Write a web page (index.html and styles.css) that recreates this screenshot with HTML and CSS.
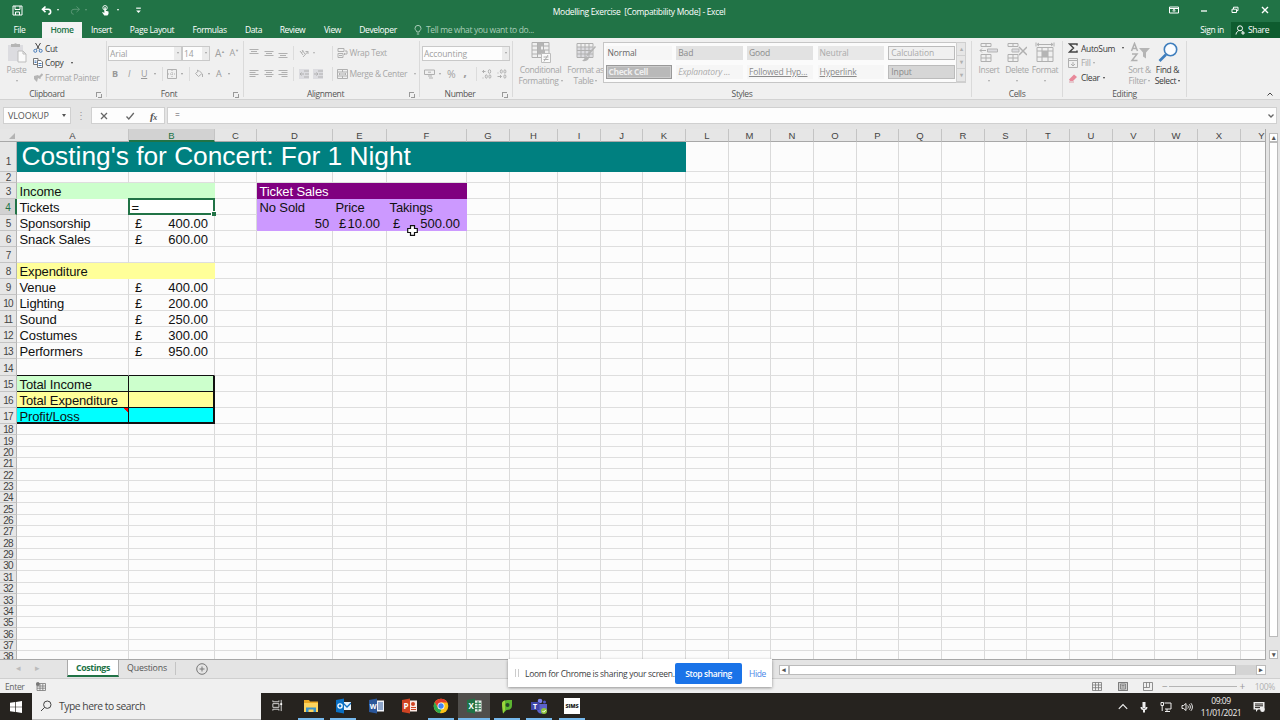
FILE: index.html
```html
<!DOCTYPE html>
<html lang="en">
<head>
    <meta charset="UTF-8">
    <title>Modelling Exercise [Compatibility Mode] - Excel</title>
    <link rel="stylesheet" href="styles.css">
</head>
<body>
<header class="titlebar">
    <div class="quick">
        <svg class="q-save" viewBox="0 0 11 11"><path d="M1 1h9v9H1zM3 1v3.5h5V1M3.5 10V7h4v3" /></svg>
        <svg class="q-undo" viewBox="0 0 11 10"><path d="M4.5 1L1.5 3.8l3 2.8M1.7 3.8H7a2.4 2.4 0 0 1 .3 5" stroke-width="1.6"/></svg>
        <i class="caret"></i>
        <svg class="q-redo" viewBox="0 0 11 10"><path d="M6.5 1l3 2.8-3 2.8M9.3 3.8H4a2.4 2.4 0 0 0-.3 5"/></svg>
        <i class="caret dim"></i>
        <svg class="q-touch" viewBox="0 0 9 12"><circle cx="4" cy="3" r="2.4"/><path class="solid" d="M3.2 2.5h1.6v3.8l3 .9v2.6L6.6 11.5H3.2L.8 8.2l.8-.6 1.6 1z"/></svg>
        <i class="caret"></i>
        <svg class="q-more" viewBox="0 0 6 6"><path d="M1 1h4"/><path class="solid" d="M1 3h4L3 5.2z"/></svg>
    </div>
    <h1>Modelling Exercise&nbsp; [Compatibility Mode] - Excel</h1>
    <div class="window-buttons">
        <svg viewBox="0 0 10 8"><path d="M.5 1h9v6h-9zM.5 2.5h9M5 6V3.5M3.5 4.8L5 3.4l1.5 1.4"/></svg>
        <svg viewBox="0 0 10 8"><path d="M2 5h6" stroke-width="1.3"/></svg>
        <svg viewBox="0 0 10 8"><path d="M2 3.2h4.5v3.3H2zM3.5 3V1.2H8v3.4H6.6"/></svg>
        <svg viewBox="0 0 10 8"><path d="M2 1l6 6M8 1L2 7" stroke-width="1.4"/></svg>
    </div>
</header>

<nav class="tabs">
    <span class="tab file">File</span>
    <span class="tab active">Home</span>
    <span class="tab insert">Insert</span>
    <span class="tab layout">Page Layout</span>
    <span class="tab formulas">Formulas</span>
    <span class="tab data">Data</span>
    <span class="tab review">Review</span>
    <span class="tab view">View</span>
    <span class="tab developer">Developer</span>
    <span class="tell">
        <svg viewBox="0 0 8 10"><path d="M2.8 7C2.8 5.6 1 5 1 3.4a3 3 0 0 1 6 0C7 5 5.2 5.6 5.2 7zM2.8 9h2.4"/></svg>
        Tell me what you want to do...
    </span>
    <span class="signin">Sign in</span>
    <span class="share">
        <svg viewBox="0 0 11 10"><circle cx="5" cy="3.3" r="2.5"/><path d="M1 9.5c.3-2 1.300-3 2.600-3.800M6.500 5.700l1.200.800M8 6.200v3.600M6.200 8h3.600"/></svg>
        Share
    </span>
</nav>

<section class="ribbon">
    <div class="group clipboard">
        <div class="group-body">
            <div class="big paste off">
                <svg viewBox="0 0 20 21"><path class="fill" d="M1 3h15v6h-5v10H1z"/><path class="dark" d="M4 2h3a2 2 0 0 1 3 0h3v3H4z"/><path class="paper" d="M11 9h5l3 3v8h-8zM16 9v3h3"/></svg>
                <span>Paste</span><i class="caret"></i>
            </div>
            <div class="stack">
                <div class="line on"><svg viewBox="0 0 10 10"><path class="ink" d="M2.500 0l4 6.500M7.500 0l-4 6.500"/><circle class="blue" cx="2.300" cy="7.800" r="1.500"/><circle class="blue" cx="7.700" cy="7.800" r="1.500"/></svg>Cut</div>
                <div class="line on"><svg viewBox="0 0 10 10"><path class="sheet-icon" d="M.5.5h4.500v6H.5z"/><path class="sheet-icon" d="M4.500 2.500h3.500l1.500 1.500v5.500h-5z"/><path class="blue" d="M1.500 3h2M1.500 4.500h2M5.500 5.500h3M5.500 7.500h3"/></svg>Copy<i class="caret gap"></i></div>
                <div class="line off"><svg viewBox="0 0 10 10"><path class="dark" d="M1 3l4-1 3 3-1 1-2-1-1 4-3-3z"/><path class="dark-line" d="M6 4.500L9.500 1"/></svg>Format Painter</div>
            </div>
        </div>
        <div class="group-name">Clipboard<i class="launcher ink"></i></div>
    </div>

    <div class="group font">
        <div class="group-body rows">
            <div class="row first">
                <div class="combo font-name">Arial<b><i class="caret"></i></b></div>
                <div class="combo font-size">14<b><i class="caret"></i></b></div>
                <span class="grow">A<sup>&#9650;</sup></span>
                <span class="shrink">A<sup>&#9660;</sup></span>
            </div>
            <div class="row second letters">
                <b>B</b><em>I</em><u>U</u><i class="caret"></i>
                <i class="rule"></i>
                <svg viewBox="0 0 10 10"><path class="gray" d="M.5.5h9v9h-9z"/><path class="gray dots" d="M5 1v8M1 5h8"/></svg>
                <i class="caret"></i>
                <i class="rule"></i>
                <svg viewBox="0 0 10 10"><path class="gray" d="M1.500 4.500L5 1.500l3 3-3.500 3zM3.500 2.500V.8M8.500 5v3"/></svg>
                <i class="caret"></i>
                <span class="color-a">A</span><i class="caret"></i>
            </div>
        </div>
        <div class="group-name">Font<i class="launcher"></i></div>
    </div>

    <div class="group alignment">
        <div class="group-body align-grid">
            <svg class="ico" viewBox="0 0 10 10"><path class="gray" d="M.5 1.500h9M2 3.500h6M.5 5.500h9"/></svg>
            <svg class="ico" viewBox="0 0 10 10"><path class="gray" d="M.5 3.500h9M2 5.500h6M.5 7.500h9"/></svg>
            <svg class="ico" viewBox="0 0 10 10"><path class="gray" d="M.5 5.500h9M2 7.500h6M.5 9.500h9"/></svg>
            <i class="rule"></i>
            <div class="pair"><svg class="ico" viewBox="0 0 10 10"><path class="gray" d="M1 3l3 4M3 2l3 4M2 5l2.500-2M4 9l5-5.500M9 6V3.500H6.500"/></svg><i class="caret pale"></i></div>
            <i class="rule"></i>
            <div class="line off"><svg viewBox="0 0 11 10"><path class="gray" d="M1 .5h6v3H1zM1 5.500h5v4H1zM2 7.500h3M8 3h2v3H7M8 5L7 6l1 1"/></svg>Wrap Text</div>

            <svg class="ico" viewBox="0 0 10 10"><path class="gray" d="M.5 1.500h9M.5 3.500h6M.5 5.500h9M.5 7.500h6"/></svg>
            <svg class="ico" viewBox="0 0 10 10"><path class="gray" d="M.5 1.500h9M2 3.500h6M.5 5.500h9M2 7.500h6"/></svg>
            <svg class="ico" viewBox="0 0 10 10"><path class="gray" d="M.5 1.500h9M3.500 3.500h6M.5 5.500h9M3.500 7.500h6"/></svg>
            <i class="rule"></i>
            <div class="pair indents">
                <svg class="ico" viewBox="0 0 10 10"><path class="fill" d="M0 0h10v10H0z"/><path class="gray" d="M5 2h5M6 5h4M5 8h5M5 5H1M2.500 3.500L1 5l1.500 1.500"/></svg>
                <svg class="ico" viewBox="0 0 10 10"><path class="fill" d="M0 0h10v10H0z"/><path class="gray" d="M5 2h5M6 5h4M5 8h5M1 5h4M3.500 3.500L5 5 3.500 6.500"/></svg>
            </div>
            <i class="rule"></i>
            <div class="line off"><svg viewBox="0 0 11 10"><path class="gray" d="M.5.5h10v9H.5zM.5 3h10M.5 7h10M5.500.5V3M5.500 7v2.500M2 5h7M3 4L2 5l1 1M8 4l1 1-1 1"/></svg>Merge &amp; Center<i class="caret gap"></i></div>
        </div>
        <div class="group-name">Alignment<i class="launcher"></i></div>
    </div>

    <div class="group number">
        <div class="group-body rows">
            <div class="row first">
                <div class="combo format">Accounting<b><i class="caret"></i></b></div>
            </div>
            <div class="row second number-icons">
                <svg viewBox="0 0 11 10"><path class="gray" d="M.5 1h10v4.500H.5zM4 3.200h3M4 7h4M5 9h4"/></svg>
                <i class="caret"></i>
                <span class="percent">%</span>
                <span class="comma">,</span>
                <i class="rule"></i>
                <svg class="decimals" viewBox="0 0 10 10"><path class="gray" d="M3.500 2.500h-3M2 1L.5 2.500 2 4M.5 9h1"/><ellipse class="gray" cx="7.500" cy="2.500" rx="1.200" ry="1.800"/><ellipse class="gray" cx="4.300" cy="7.500" rx="1" ry="1.700"/><ellipse class="gray" cx="7.900" cy="7.500" rx="1" ry="1.700"/></svg>
                <svg class="decimals" viewBox="0 0 10 10"><path class="gray" d="M.5 7.500h4M3 6l1.500 1.500L3 9M.5 4h1"/><ellipse class="gray" cx="4.300" cy="2.500" rx="1" ry="1.700"/><ellipse class="gray" cx="7.900" cy="2.500" rx="1" ry="1.700"/><ellipse class="gray" cx="7.900" cy="7.500" rx="1" ry="1.700"/></svg>
            </div>
        </div>
        <div class="group-name">Number<i class="launcher"></i></div>
    </div>

    <div class="group styles">
        <div class="group-body">
            <div class="big conditional off">
                <svg viewBox="0 0 20 21"><path class="gray" d="M1 .5h17v15H1zM6.500.5v15M12.500.5v15M1 4h17M1 8h17M1 12h17"/><path class="dark" d="M7 1h5v3H7zM7 4h3v4H7zM7 8h7v4H7z"/><path class="paper" d="M10.500 11.500h9v9h-9z"/><path class="gray" d="M12.500 15h5M12.500 17.500h5M17 13l-4 6.500"/></svg>
                <span>Conditional<br>Formatting<i class="caret"></i></span>
            </div>
            <div class="big as-table off">
                <svg viewBox="0 0 20 21"><path class="fill" d="M1 5h15v10H1z"/><path class="gray" d="M1 1.500h16v14H1zM5 1.500v14M9 1.500v14M13 1.500v14M1 5h16M1 8.500h16M1 12h16"/><path class="dark" d="M20 5l-8 9-2-1 9-9zM10 14l3 2c-1 3-4 3.500-7 3 2-1 2-3 4-5z"/></svg>
                <span>Format as<br>Table<i class="caret"></i></span>
            </div>
            <div class="gallery">
                <span class="swatch normal">Normal</span>
                <span class="swatch bad">Bad</span>
                <span class="swatch bad">Good</span>
                <span class="swatch neutral">Neutral</span>
                <span class="swatch calc">Calculation</span>
                <span class="swatch check">Check Cell</span>
                <span class="swatch expl">Explanatory ...</span>
                <span class="swatch link">Followed Hyp...</span>
                <span class="swatch link">Hyperlink</span>
                <span class="swatch input">Input</span>
            </div>
            <div class="gallery-nav"><b>&#9652;</b><b>&#9662;</b><b>&#9662;</b></div>
        </div>
        <div class="group-name">Styles</div>
    </div>

    <div class="group cells">
        <div class="group-body">
            <div class="big off">
                <svg viewBox="0 0 20 21"><path class="gray" d="M2 1.500h10v3H2zM7 1.500v3M2 12.500h10v7H2zM7 12.500v7M2 16h10M1 8.500h6M3 6.500l-2 2 2 2"/><path class="fill edge" d="M8.500 7h10v3h-10z"/></svg>
                <span>Insert</span><i class="caret"></i>
            </div>
            <div class="big off">
                <svg viewBox="0 0 20 21"><path class="gray" d="M1 1.500h10v3H1zM6 1.500v3M1 12.500h10v7H1zM6 12.500v7M1 16h10"/><path class="fill edge" d="M5 7h7v3H5z"/><path class="gray thick" d="M12 5l8 8M20 5l-8 8"/></svg>
                <span>Delete</span><i class="caret"></i>
            </div>
            <div class="big off">
                <svg viewBox="0 0 20 21"><path class="gray" d="M2 5.500h16v14H2zM7 5.500v14M13 5.500v14M2 9h16M2 15h16M1 .5v4M19 .5v4M2 2.500h16M4 1L2 2.500 4 4M16 1l2 1.500L16 4"/><path class="dark" d="M7 9h6v6H7z"/></svg>
                <span>Format</span><i class="caret"></i>
            </div>
        </div>
        <div class="group-name">Cells</div>
    </div>

    <div class="group editing">
        <div class="group-body">
            <div class="stack">
                <div class="line on"><svg viewBox="0 0 10 10"><path class="ink thick" d="M9 2.500V1H1.500l4 4-4 4H9V7.500"/></svg>AutoSum<i class="caret gap"></i></div>
                <div class="line off"><svg viewBox="0 0 10 10"><path class="gray" d="M.5.5h9v9h-9zM.5 2.500h9M5 4v4M3 6l2 2 2-2"/></svg>Fill<i class="caret"></i></div>
                <div class="line on"><svg viewBox="0 0 10 10"><path class="pink" d="M1 6.500L6 1.500l3 2.500-4 4H2z"/><path class="pink-edge" d="M1 9h5"/></svg>Clear<i class="caret"></i></div>
            </div>
            <div class="big sort off">
                <svg viewBox="0 0 20 21"><path class="gray thick" d="M1.500 9L4.500 1.500 7.500 9M2.500 6.500h4M2 12h5l-5 6.500h5.500"/><path class="dark" d="M9 6h11l-4 4.500v6l-3-2v-4z"/></svg>
                <span>Sort &amp;<br>Filter<i class="caret"></i></span>
            </div>
            <div class="big find on">
                <svg viewBox="0 0 20 21"><circle class="lens" cx="12.500" cy="7.500" r="6.200"/><path class="handle" d="M8 12.500l-6.500 6.500"/></svg>
                <span>Find &amp;<br>Select<i class="caret"></i></span>
            </div>
        </div>
        <div class="group-name">Editing</div>
    </div>
    <svg class="collapse" viewBox="0 0 8 6"><path class="ink" d="M1.500 4.500L4 2l2.500 2.500"/></svg>
</section>

<section class="formula-bar">
    <div class="name-box">VLOOKUP<i class="caret"></i></div>
    <span class="grip">&#8942;</span>
    <div class="fx">
        <svg viewBox="0 0 10 10"><path class="gray-dark" d="M2 2l6 6M8 2L2 8"/></svg>
        <svg viewBox="0 0 10 10"><path class="gray-dark" d="M1.500 5.500l2.300 2.500L8.800 2"/></svg>
        <span>f<small>x</small></span>
    </div>
    <div class="formula"><span>=</span><svg viewBox="0 0 8 6"><path class="gray-dark" d="M1.500 1.500L4 4l2.500-2.500"/></svg></div>
</section>

<main class="workbook">
    <div class="sheet" id="sheet"></div>
    <div class="vscroll">
        <b>&#9652;</b>
        <div class="thumb"></div>
        <b>&#9662;</b>
    </div>
    <svg class="cursor" viewBox="0 0 11 11"><path d="M3.500.7h4v2.800h2.800v4H7.500v2.800h-4V7.500H.7v-4h2.800z"/></svg>
</main>

<section class="sheet-tabs">
    <span class="nav-arrow">&#9666;</span>
    <span class="nav-arrow">&#9656;</span>
    <span class="sheet-tab current">Costings</span>
    <span class="sheet-tab">Questions</span>
    <svg class="add" viewBox="0 0 12 12"><circle cx="6" cy="6" r="5.300"/><path d="M6 3.500v5M3.500 6h5"/></svg>
    <div class="hscroll">
        <b>&#9666;</b>
        <div class="track"><div class="thumb"></div></div>
        <b>&#9656;</b>
    </div>
</section>

<section class="statusbar">
    <span class="mode">Enter</span>
    <svg class="macro" viewBox="0 0 10 9"><path d="M1 1.500h8.500v7H1zM1 4h8.500M1 6.200h8.500M4 2v6.500M6.800 2v6.500"/><circle cx="1.800" cy="2" r="1.600"/></svg>
    <div class="views">
        <svg viewBox="0 0 10 9"><path d="M.5.5h9v8h-9zM.5 3h9M.5 5.700h9M3.500.5v8M6.500.5v8"/></svg>
        <svg viewBox="0 0 10 9"><path class="shade" d="M.5.5h9v8h-9z"/><path d="M.5.5h9v8h-9zM2.500 2h5v5h-5zM3.500 3.500h3M3.500 5h3"/></svg>
        <svg viewBox="0 0 10 9"><path d="M.5.5h9v8h-9zM.5 5.500h6v-5M3.500.5v5"/></svg>
    </div>
    <span class="zoom">&minus;<i></i>+</span>
    <span class="percent">100%</span>
</section>

<footer class="taskbar">
    <div class="start"><svg viewBox="0 0 12 12"><path d="M0 1.700L5.300 1v4.700H0zM6 .9L12 0v5.700H6zM0 6.300h5.300V11L0 10.300zM6 6.300h6V12l-6-.9z"/></svg></div>
    <div class="search">
        <svg viewBox="0 0 12 12"><circle cx="7.300" cy="4.700" r="3.700"/><path d="M4.600 7.400L1 11"/></svg>
        Type here to search
    </div>
    <div class="app taskview"><svg viewBox="0 0 14 14"><path d="M2 1.500v1.500h6.500V1.500M2 5h6.500v4H2zM2 12.500V11h6.500v1.500M11 1v12" stroke="#ddd" fill="none"/><path d="M10 4.500h2v2h-2z" fill="#fff"/></svg></div>
    <div class="app open"><svg viewBox="0 0 16 16"><path d="M1 2h5l1 1.500h8V14H1z" fill="#e9a825"/><path d="M1 5h14v9H1z" fill="#fbd35e"/><path d="M3 14V9.500h10V14h-2.500v-2.500h-5V14z" fill="#3a93c8"/></svg></div>
    <div class="app open"><svg viewBox="0 0 16 16"><path d="M8 4h8v8H8z" fill="#e8f2fb"/><path d="M8 5l4 4 4-4" stroke="#0f6fc0" fill="none" stroke-width="1.300"/><path d="M1 2l8-1.500v15L1 14z" fill="#0a70c4"/><circle cx="5" cy="8" r="2.100" stroke="#fff" stroke-width="1.300" fill="none"/></svg></div>
    <div class="app"><svg viewBox="0 0 16 16"><path d="M8 2.500h8v11H8z" fill="#f2f5fb"/><path d="M10 5h5M10 7h5M10 9h5M10 11h5" stroke="#2b579a"/><path d="M1 2l8-1.500v15L1 14z" fill="#2b579a"/><text x="1.700" y="10.500" font-size="7">W</text></svg></div>
    <div class="app"><svg viewBox="0 0 16 16"><path d="M8 2.500h8v11H8z" fill="#fbeae5"/><path d="M10 9.500h5M10 11.500h5" stroke="#d04423"/><circle cx="12" cy="6" r="2" fill="#d04423"/><path d="M1 2l8-1.500v15L1 14z" fill="#d04423"/><text x="2.600" y="10.700" font-size="8">P</text></svg></div>
    <div class="app open"><svg viewBox="0 0 16 16"><circle cx="8" cy="8" r="7.300" fill="#fbc116"/><path d="M1.700 4.300A7.300 7.300 0 0 1 14.400 4.500H8L4.800 9.800z" fill="#e33b2e"/><path d="M1.700 4.300L5 10l3.500 1.600-1.700 3.600A7.300 7.300 0 0 1 1.700 4.300z" fill="#2da94f"/><circle cx="8" cy="8" r="3.500" fill="#fff"/><circle cx="8" cy="8" r="2.700" fill="#4285f4"/></svg></div>
    <div class="app open active"><svg viewBox="0 0 16 16"><path d="M8 2.500h7.500v11H8z" fill="#e6f2ea"/><path d="M12 3v10M9 5.300h6M9 8h6M9 10.700h6" stroke="#217346"/><path d="M1 2l8-1.500v15L1 14z" fill="#217346"/><text x="2.600" y="10.700" font-size="8">X</text></svg></div>
    <div class="app open"><svg viewBox="0 0 16 16"><path d="M3 6c0-3 2-4 10-4v5c0 4-2 5-5.500 5L4 15.500z" fill="#5cb531"/><path d="M3 6c0-2 1-3 3-3.500V12l-2 3.500z" fill="#9bd63c"/><circle cx="8.500" cy="7" r="2" fill="#26452a"/></svg></div>
    <div class="app open"><svg viewBox="0 0 16 16"><circle cx="9" cy="3" r="2.300" fill="#7b83eb"/><circle cx="13.500" cy="4" r="1.500" fill="#5059c9"/><path d="M6 6h10v5c0 3-3 4.500-6 4.500S6 13 6 11z" fill="#5b62c9"/><path d="M0 4h8.500v8H0z" fill="#4046a8"/><text x="2" y="10.500" font-size="7">T</text><circle cx="13" cy="13" r="3" fill="#8fc53f"/><path d="M11.500 13l1.200 1.200 2-2.200" stroke="#fff" fill="none"/></svg></div>
    <div class="app open"><span class="sims">SIMS</span></div>
    <div class="tray">
        <svg viewBox="0 0 10 10"><path d="M1.500 6.500L5 3l3.500 3.500"/></svg>
        <svg viewBox="0 0 10 12"><path class="solid" d="M3.500 1h3v6h-3zM1.500 6H3c.5 2 3.500 2 4 0h1.500c0 2-1 3-2.500 3v2.500H4V9C2.500 9 1.500 8 1.500 6z"/></svg>
        <svg viewBox="0 0 12 12"><path d="M4.500 2H11v6H5M7 8v2M5 10.500h5M1 1.500h2.500v3H1zM2.200 4.500V10"/></svg>
        <svg class="volume" viewBox="0 0 12 12"><path d="M1 4.500h1.500L5 2.500v7l-2.500-2H1zM6.700 4.500c.8 1 .8 2 0 3M8.300 3.300c1.400 1.800 1.400 3.600 0 5.400M9.900 2.200c2 2.500 2 5.100 0 7.600"/></svg>
        <div class="clock">09:09<br>11/01/2021</div>
        <svg class="note" viewBox="0 0 12 12"><path class="solid" d="M.5 1h11v7.500H5L3 11V8.500H.5z"/><path class="cut" d="M2 3h8M2 4.800h8M2 6.600h5"/><circle class="solid" cx="9.500" cy="8.800" r="2.300"/></svg>
    </div>
</footer>

<div class="share-popup">
    <i class="handle"></i>
    <span>Loom for Chrome is sharing your screen.</span>
    <button>Stop sharing</button>
    <a>Hide</a>
</div>

<script src="sheet.js"></script>
</body>
</html>
```
FILE: styles.css
```css
* {
    box-sizing: border-box;
}
body {
    margin: 0;
    width: 1280px;
    height: 720px;
    display: flex;
    flex-direction: column;
    overflow: hidden;
    position: relative;
    background: #e4e4e4;
    font-family: "Open Sans", "Noto Sans", sans-serif;
    font-size: 8.500px;
    letter-spacing: -0.350px;
    color: #444;
}
svg {
    display: block;
    flex: none;
    fill: none;
    stroke-width: 1;
}
i {
    font-style: normal;
}
.caret {
    flex: none;
    display: inline-block;
    width: 0;
    height: 0;
    border: 1.8px solid transparent;
    border-top: 2.2px solid currentColor;
    border-bottom: 0;
}
.pale {
    color: #b0b0b0;
}
.gap {
    margin-left: 7px;
}

/* title bar */
.titlebar {
    height: 22px;
    flex: none;
    background: #217346;
    color: #fff;
    display: grid;
    grid-template-columns: 480px 318px 1fr;
    align-items: center;
    padding-bottom: 2px;
}
.quick {
    display: flex;
    align-items: center;
    padding-left: 12px;
    height: 20px;
}
.quick svg {
    stroke: #fff;
    height: 11px;
}
.quick .solid {
    fill: #fff;
    stroke: none;
}
.q-save { width: 11px; }
.q-undo { width: 11px; margin-left: 18px; }
.q-undo + .caret { margin-left: 5px; }
.q-redo { width: 11px; margin-left: 11px; opacity: 0.25; }
.quick .dim { margin-left: 4px; opacity: 0.3; }
.q-touch { width: 9px; margin-left: 14px; }
.q-touch + .caret { margin-left: 7px; }
.quick .q-more { width: 7px; height: 7px; margin-left: 16px; }
.titlebar h1 {
    margin: 2px 0 0;
    font-size: 8.500px;
    font-weight: 400;
    text-align: center;
    letter-spacing: -0.330px;
}
.window-buttons {
    display: flex;
    justify-content: flex-end;
    gap: 20.500px;
    padding-right: 10px;
}
.window-buttons svg {
    width: 10px;
    height: 8px;
    stroke: #fff;
}

.tabs {
    height: 16px;
    flex: none;
    background: #217346;
    color: #fff;
    display: flex;
    align-items: center;
    line-height: 16px;
}
.tab {
    text-align: center;
    white-space: nowrap;
}
.file { width: 39px; margin-right: 3px; }
.active {
    width: 40px;
    background: #f3f3f3;
    color: #217346;
    font-weight: 600;
}
.insert { width: 39px; }
.layout { width: 62px; }
.formulas { width: 53px; }
.data { width: 35px; }
.review { width: 43px; }
.view { width: 37px; }
.developer { width: 54px; }
.tell {
    display: flex;
    align-items: center;
    gap: 4px;
    margin-left: 9px;
    color: #a9cdb8;
}
.tell svg {
    width: 8px;
    height: 10px;
    stroke: #a9cdb8;
}
.signin {
    margin-left: auto;
    margin-right: 7px;
}
.share {
    width: 49px;
    height: 16px;
    background: #0e5c2f;
    display: flex;
    align-items: center;
    gap: 2px;
    padding-left: 4px;
}
.share svg {
    width: 11px;
    height: 10px;
    stroke: #fff;
}

/* ribbon */
.ribbon {
    height: 62px;
    flex: none;
    display: flex;
    background: #f0f0f0;
    border-bottom: 1px solid #d2d2d2;
    padding-top: 3px;
}
.group {
    height: 56px;
    border-right: 1px solid #dadada;
    display: flex;
    flex-direction: column;
    flex: none;
}
.clipboard { width: 107px; }
.font { width: 137px; }
.alignment { width: 176px; }
.number { width: 93px; }
.styles { width: 459px; }
.cells { width: 91px; }
.editing { width: 124px; }
.group-body {
    height: 46px;
    flex: none;
    display: flex;
}
.group-name {
    height: 14px;
    flex: none;
    line-height: 14px;
    text-align: center;
    position: relative;
    color: #555;
    padding-right: 12px;
}
.launcher {
    position: absolute;
    right: 5px;
    top: 5px;
    width: 5px;
    height: 5px;
    border-left: 1px solid #999;
    border-top: 1px solid #999;
}
.launcher::after {
    content: "";
    position: absolute;
    left: 1px;
    top: 1px;
    width: 3px;
    height: 3px;
    border-right: 1px solid #999;
    border-bottom: 1px solid #999;
}
.on { color: #3b3b3b; }
.off { color: #a6a6a6; }
.gray { stroke: #b0b0b0; }
.gray-dark { stroke: #666; stroke-width: 1.3; }
.ink { stroke: #444; }
.blue { stroke: #4a7ebb; }
.dark { fill: #b5b5b5; }
.dark-line { stroke: #b5b5b5; stroke-width: 2; }
.fill { fill: #dcdce0; }
.edge { stroke: #b5b5b5; }
.paper { fill: #fafafa; stroke: #bdbdbd; }
.sheet-icon { fill: #fff; stroke: #777; }
.thick { stroke-width: 1.5; }
.dots { stroke-dasharray: 1 1; }
.pink { fill: #e8899a; }
.pink-edge { stroke: #d9a0aa; }
.lens { stroke: #3f7ebd; stroke-width: 1.6; fill: #fafcff; }
.handle { stroke: #3f7ebd; stroke-width: 2.6; }

.big {
    display: flex;
    flex-direction: column;
    align-items: center;
    text-align: center;
    line-height: 10.600px;
    white-space: nowrap;
    padding-top: 1px;
}
.big svg {
    width: 20px;
    height: 21px;
    margin-bottom: 2px;
}
.big > .caret {
    margin-top: 4px;
}
.big span .caret {
    margin-left: 2px;
    vertical-align: middle;
}
.paste { width: 33px; }
.stack {
    display: flex;
    flex-direction: column;
}
.line {
    display: flex;
    align-items: center;
    height: 15.300px;
    white-space: nowrap;
}
.line svg {
    width: 10px;
    height: 10px;
    margin-right: 2px;
}
.stack .line:first-child {
    height: 14px;
}
.rows {
    flex-direction: column;
}
.row {
    display: flex;
    align-items: center;
}
.first {
    height: 24px;
}
.second {
    height: 17px;
}
.combo {
    height: 15px;
    line-height: 13px;
    border: 1px solid #c9c9c9;
    background: #fdfdfd;
    color: #a0a0a0;
    display: flex;
    justify-content: space-between;
    padding-left: 1px;
    letter-spacing: -0.1px;
}
.combo b {
    width: 7px;
    background: #ececec;
    display: flex;
    align-items: center;
    justify-content: center;
}
.font-name { width: 74px; margin-left: 1px; }
.font-size { width: 28px; }
.grow, .shrink {
    margin-left: 5px;
    color: #a0a0a0;
    font-size: 10px;
    line-height: 12px;
}
.shrink {
    font-size: 9px;
}
.grow sup, .shrink sup {
    font-size: 4px;
    line-height: 1;
}
.letters {
    color: #999;
    font-size: 9px;
    padding-left: 5px;
}
.letters b { width: 15px; }
.letters em { width: 14px; padding-left: 1px; }
.letters u { width: 13px; }
.letters svg { width: 10px; height: 10px; }
.letters .rule { margin: 0 4px 0 6px; }
.letters svg + .caret { margin-left: 4px; }
.letters .color-a { margin: 0 7px 0 6px; }
.rule {
    width: 1px;
    height: 14px;
    background: #dcdcdc;
    flex: none;
}
.align-grid {
    display: grid;
    grid-template-columns: 14.500px 14.500px 14.500px 6px 33px 5px 1fr;
    grid-template-rows: 24px 18px;
    padding-left: 5px;
    align-items: center;
}
.ico {
    width: 10px;
    height: 10px;
}
.pair {
    display: flex;
    align-items: center;
    gap: 4px;
}
.align-grid .line svg {
    width: 11px;
}
.format {
    width: 88px;
    margin-left: 2px;
}
.number-icons {
    padding-left: 4px;
    color: #a0a0a0;
}
.number-icons svg { width: 11px; height: 10px; margin-right: 4px; }
.number-icons .percent { font-size: 10.500px; margin-left: 6px; }
.number-icons .comma { font-size: 13px; line-height: 8px; font-weight: 700; margin: -5px 9px 0 8px; }
.number-icons .decimals {
    width: 10px;
    margin: 0 0 0 5px;
}
.conditional { width: 55px; }
.as-table { width: 35px; }
.gallery {
    width: 353px;
    height: 41px;
    margin-top: 1px;
    border: 1px solid #c6c6c6;
    border-right: 0;
    background: #fbfbfb;
    display: grid;
    grid-template-columns: repeat(5, 66.500px);
    grid-template-rows: 14px 14px;
    gap: 5px 4.200px;
    padding: 3px 0 0 1.500px;
    overflow: hidden;
    letter-spacing: -0.1px;
}
.swatch {
    line-height: 14px;
    padding-left: 2px;
    background: #f6f6f6;
    color: #8a8a8a;
    white-space: nowrap;
}
.normal { color: #666; }
.bad { background: #e2e2e2; }
.neutral { background: #e8e8e8; color: #aaa; }
.calc { background: #f0f0f0; border: 1px solid #bbb; color: #aaa; line-height: 12px; }
.check { background: #b9b9b9; border: 1px solid #999; outline: 1px solid #ccc; outline-offset: -2px; color: #eee; font-weight: 700; line-height: 12px; letter-spacing: -0.400px; }
.expl { font-style: italic; color: #aaa; }
.link { text-decoration: underline; }
.input { background: #d6d6d6; border: 1px solid #bbb; line-height: 12px; }
.gallery-nav {
    width: 10px;
    height: 41px;
    margin-top: 1px;
    display: grid;
    border: 1px solid #cfcfcf;
    background: #e6e6e6;
}
.gallery-nav b {
    font-size: 6px;
    line-height: 12px;
    text-align: center;
    color: #b0b0b0;
    border-bottom: 1px solid #d0d0d0;
}
.styles .group-name { padding-right: 0; }
.cells .big { width: 28px; }
.cells .group-body { padding-left: 3px; }
.cells .group-name { padding-right: 0; }
.editing .stack { width: 62px; padding-left: 5px; }
.editing .stack .line svg { margin-right: 3px; }
.editing .stack .caret { margin-left: 3px; }
.editing .stack .gap { margin-left: 7px; }
.sort { width: 29px; }
.find { width: 27px; }
.editing .group-name { padding-right: 0; }
.collapse {
    width: 8px;
    height: 6px;
    margin: 50px 0 0 79px;
}

/* formula bar */
.formula-bar {
    height: 29px;
    flex: none;
    display: flex;
    padding: 7px 3px 5px;
    color: #555;
}
.formula-bar > div {
    height: 17px;
    background: #fdfdfd;
    border: 1px solid #d0d0d0;
    display: flex;
    align-items: center;
}
.name-box {
    width: 68px;
    justify-content: space-between;
    padding: 0 4px;
    font-size: 9px;
    letter-spacing: -0.1px;
}
.name-box .caret { border-width: 2.500px; border-top-width: 3.200px; border-bottom: 0; }
.grip {
    width: 20px;
    text-align: center;
    line-height: 17px;
    font-size: 10px;
    color: #999;
}
.fx {
    width: 74px;
    padding: 0 7px;
    justify-content: space-between;
}
.fx svg { width: 10px; height: 10px; }
.fx span { font: italic 700 11px "Liberation Serif", serif; }
.fx small { font-size: 8px; }
.formula {
    flex: 1;
    margin-left: 2px;
    padding: 0 1px 0 7px;
    justify-content: space-between;
}
.formula span { line-height: 10px; margin-top: -2px; }
.formula svg { width: 8px; height: 6px; }

/* sheet */
.workbook {
    height: 531px;
    flex: none;
    display: flex;
    position: relative;
}
.sheet {
    width: 1266px;
    height: 531px;
    overflow: hidden;
    display: grid;
    background: #fcfcfc;
    border-right: 1px solid #a8a8a8;
    border-bottom: 1px solid #a8a8a8;
    font: 13px "Liberation Sans", Arial, sans-serif;
    color: #111;
    letter-spacing: 0;
}
.cell {
    border-right: 1px solid #dadada;
    border-bottom: 1px solid #dedede;
    padding: 0 0 0 2.500px;
    line-height: 18px;
    letter-spacing: -0.120px;
    white-space: nowrap;
    min-width: 0;
    min-height: 0;
    display: flex;
    justify-content: space-between;
}
.col-head, .row-head, .corner {
    background: #e6e6e6;
    border: 0 solid #c4c4c4;
    color: #444;
    text-align: center;
    overflow: hidden;
    min-height: 0;
}
.col-head {
    border-right-width: 1px;
    border-bottom: 1px solid #a8a8a8;
    font-size: 9.500px;
    line-height: 14px;
}
.col-head.selected {
    background: #d2d2d2;
    color: #217346;
    border-bottom: 2px solid #217346;
}
.row-head {
    border-right: 1px solid #b5b5b5;
    border-bottom-width: 1px;
    font-size: 10px;
    letter-spacing: -0.900px;
    line-height: 10px;
    padding-bottom: 1px;
    display: flex;
    align-items: flex-end;
    justify-content: center;
}
.row-head.short {
    padding-bottom: 0;
    line-height: 9px;
}
.row-head.tall {
    padding-bottom: 4px;
}
.row-head.selected {
    background: #d2d2d2;
    color: #217346;
    border-right: 2px solid #217346;
}
.corner {
    border-bottom: 1px solid #a8a8a8;
    padding: 4px 2px 0 9px;
}
.corner::after {
    content: "";
    display: block;
    border-left: 6px solid transparent;
    border-bottom: 6px solid #b4b4b4;
}
.title {
    grid-column: span 11;
    background: #008080;
    border-color: #008080;
    color: #fff;
    font-size: 26.300px;
    line-height: 29px;
    letter-spacing: 0;
    padding-left: 4.500px;
}
.green { background: #ccffcc; border-color: #ccffcc; }
.yellow { background: #ffff99; border-color: #ffff99; }
.purple { background: #800080; border-color: #800080; color: #fff; }
.lilac { background: #cc99ff; border-color: #cc99ff; }
.money {
    padding: 0 6px;
    letter-spacing: 0;
}
.right {
    justify-content: flex-end;
    padding-right: 3px;
}
.total {
    border: 0 solid #111;
    border-right-width: 1px;
    border-bottom-width: 1px;
}
.total.cyan { background-color: #00ffff; border-bottom-width: 2px; }
.total.end { border-right-width: 2px; }
.above { border-bottom: 1px solid #111; }
.editing-cell {
    margin: -1px 0 0 -1px;
    border: 2px solid #217346;
    padding-left: 1.500px;
    line-height: 15px;
    position: relative;
    background: #fff;
}
.editing-cell::after {
    content: "";
    position: absolute;
    right: -3px;
    bottom: -3px;
    width: 4px;
    height: 4px;
    background: #217346;
    border: solid #fff;
    border-width: 1px 0 0 1px;
}
.comment {
    background-image: linear-gradient(225deg, #f00 3px, transparent 3px);
}
.vscroll {
    width: 14px;
    padding: 4px 2px 1px 3px;
    display: flex;
    flex-direction: column;
    background: #e4e4e4;
}
.vscroll b, .hscroll b {
    height: 9px;
    line-height: 8px;
    font-size: 7px;
    text-align: center;
    background: #fff;
    border: 1px solid #bbb;
    color: #555;
}
.vscroll .thumb {
    height: 495px;
    margin: 0 0 auto;
    background: #fff;
    border: 1px solid #bbb;
}
.cursor {
    position: absolute;
    left: 407px;
    top: 96px;
    width: 11px;
    height: 11px;
    fill: #fff;
    stroke: #111;
    stroke-width: 1.200px;
}

/* sheet tabs */
.sheet-tabs {
    height: 19px;
    flex: none;
    display: flex;
    border-bottom: 1px solid #cfcfcf;
    font-size: 8.800px;
    line-height: 17px;
    color: #555;
    letter-spacing: -0.200px;
}
.nav-arrow {
    padding-left: 16px;
    box-sizing: content-box;
    width: 3px;
    color: #bbb;
}
.nav-arrow + .sheet-tab {
    margin-left: 29px;
}
.sheet-tab {
    width: 57px;
    height: 13px;
    margin-top: 2px;
    line-height: 13px;
    text-align: center;
    border-right: 1px solid #c4c4c4;
}
.sheet-tab.current {
    width: 52px;
    height: 17px;
    margin-top: 0;
    line-height: 17px;
    background: #fff;
    color: #217346;
    font-weight: 700;
    letter-spacing: -0.400px;
    border-right: 1px solid #aaa;
    border-left: 1px solid #aaa;
    border-bottom: 2px solid #217346;
}
.add {
    width: 12px;
    height: 12px;
    margin: 3px 0 0 20px;
    stroke: #777;
}
.hscroll {
    width: 487px;
    margin: 5px 14px 0 auto;
    display: flex;
}
.hscroll b {
    width: 10px;
    height: 10px;
}
.hscroll .track {
    flex: 1;
    height: 10px;
    padding-right: 20px;
    background: #d4d4d4;
}
.hscroll .thumb {
    height: 10px;
    background: #fff;
    border: 1px solid #bbb;
}

.statusbar {
    height: 14px;
    flex: none;
    display: flex;
    align-items: center;
    background: #f0f0f0;
    padding: 0 5px;
    color: #666;
}
.statusbar svg { width: 10px; height: 9px; stroke: #777; stroke-width: 0.800; }
.mode { width: 18px; }
.macro { margin-left: 13px; }
.macro circle { fill: #777; }
.shade { fill: #d0d0d0; }
.views {
    margin-left: auto;
    display: flex;
    gap: 15.500px;
}
.zoom {
    display: flex;
    align-items: center;
    margin-left: 9px;
    font-size: 10px;
    color: #999;
}
.zoom i {
    width: 68px;
    height: 1px;
    margin: 0 2px;
    background: #b5b5b5;
}
.statusbar > .percent {
    margin-left: 10px;
    color: #b0b0b0;
}

/* taskbar */
.taskbar {
    height: 27px;
    flex: none;
    display: flex;
    background: #26231f;
    color: #eee;
}
.start {
    width: 32px;
    display: flex;
    align-items: center;
    justify-content: center;
}
.start svg { width: 12px; height: 12px; fill: #fff; }
.search {
    width: 229px;
    background: #f0f0f0;
    color: #444;
    display: flex;
    align-items: center;
    padding-left: 8px;
    font-size: 10.300px;
    letter-spacing: -0.450px;
    border-bottom: 1px solid #bbb;
    margin-right: 0.500px;
}
.search svg { width: 12px; height: 12px; stroke: #444; margin-right: 7px; }
.app {
    width: 26px;
    margin-right: 6.700px;
    display: flex;
    align-items: center;
    justify-content: center;
    border-bottom: 2px solid transparent;
}
.app.taskview { width: 32px; margin-right: 4px; }
.app.open { border-color: #76b9ed; }
.app.active { background: #504e4b; width: 32px; margin: 0 3.700px 0 -3px; }
.app svg { width: 16px; height: 16px; }
.app.taskview svg { width: 13px; height: 13px; }
.app text { fill: #fff; font-weight: 700; font-family: "Open Sans", sans-serif; }
.sims {
    width: 16px;
    height: 16px;
    line-height: 16px;
    background: #fff;
    color: #222;
    font-size: 5.500px;
    font-weight: 800;
    text-align: center;
    letter-spacing: -0.1px;
}
.tray {
    margin-left: auto;
    display: flex;
    align-items: center;
    padding-right: 15px;
    letter-spacing: -0.480px;
}
.tray svg {
    width: 12px;
    height: 12px;
    margin-right: 9.500px;
    stroke: #eee;
}
.tray .volume { margin-right: 7px; }
.tray .solid { fill: #eee; stroke: none; }
.tray .cut { stroke: #26231f; }
.clock {
    width: 42px;
    text-align: center;
    line-height: 12px;
    margin-right: 11px;
}
.tray .note { margin: 0; }

.share-popup {
    position: absolute;
    left: 508px;
    top: 659px;
    width: 264px;
    height: 28px;
    background: #fff;
    box-shadow: 0 1px 3px rgba(0, 0, 0, 0.4);
    display: flex;
    align-items: center;
    padding-left: 7px;
    color: #3c4043;
    white-space: nowrap;
}
.share-popup .handle {
    width: 4px;
    height: 8px;
    border: solid #ccc;
    border-width: 0 1px;
}
.share-popup span { width: 150px; margin-left: 6px; letter-spacing: -0.300px; }
.share-popup button {
    width: 67px;
    height: 21px;
    padding: 0;
    border: 0;
    border-radius: 2px;
    background: #1a73e8;
    color: #fff;
    font: 600 8.500px "Open Sans", sans-serif;
    letter-spacing: -0.400px;
}
.share-popup a { margin-left: 7px; color: #4a86e8; }
```
FILE: sheet.js
```js
const colWidths = [17, 112, 86, 42, 76, 54, 80, 43, 48, 43, 42, 43, 43, 42, 43, 43, 42, 43, 43, 42, 43, 43, 42, 43, 43, 42];
const letters = 'ABCDEFGHIJKLMNOPQRSTUVWXY';

// header row, then rows 1-38
const rowHeights = [13, 30, 11];
for (let r = 3; r <= 13; r++) rowHeights.push(16);
rowHeights.push(17, 16, 16, 16);
for (let r = 18; r <= 38; r++) rowHeights.push(11.35);

const text = {
    A1: "Costing's for Concert: For 1 Night",
    A3: 'Income', A4: 'Tickets', A5: 'Sponsorship', A6: 'Snack Sales',
    A8: 'Expenditure', A9: 'Venue', A10: 'Lighting', A11: 'Sound', A12: 'Costumes', A13: 'Performers',
    A15: 'Total Income', A16: 'Total Expenditure', A17: 'Profit/Loss',
    B4: '=',
    D3: 'Ticket Sales', D4: 'No Sold', E4: 'Price', F4: 'Takings', D5: '50'
};
const money = {
    B5: '400.00', B6: '600.00', B9: '400.00', B10: '200.00', B11: '250.00',
    B12: '300.00', B13: '950.00', E5: '10.00', F5: '500.00'
};
const style = { A1: 'title', B4: 'editing-cell', D5: 'lilac right', A14: 'above', B14: 'above' };

['A3', 'B3'].forEach(k => style[k] = 'green');
['A8', 'B8'].forEach(k => style[k] = 'yellow');
['D3', 'E3', 'F3'].forEach(k => style[k] = 'purple');
['D4', 'E4', 'F4', 'E5', 'F5'].forEach(k => style[k] = 'lilac');
style.A15 = 'green total';
style.B15 = 'green total end';
style.A16 = 'yellow total';
style.B16 = 'yellow total end';
style.A17 = 'cyan total comment';
style.B17 = 'cyan total end';

const sheet = document.getElementById('sheet');
sheet.style.gridTemplateColumns = colWidths.map(w => w + 'px').join(' ');
sheet.style.gridTemplateRows = rowHeights.map(h => h + 'px').join(' ');

function add(cls, content) {
    const el = document.createElement('div');
    el.className = cls;
    (Array.isArray(content) ? content : [content]).forEach(t => {
        const span = document.createElement('span');
        span.textContent = t || '';
        el.appendChild(span);
    });
    sheet.appendChild(el);
}

function rowClass(r) {
    if (r === 1) return 'row-head tall';
    if (r === 2 || r > 17) return 'row-head short';
    return r === 4 ? 'row-head selected' : 'row-head';
}

add('corner', '');
for (const c of letters) add('col-head' + (c === 'B' ? ' selected' : ''), c);

for (let r = 1; r <= 38; r++) {
    add(rowClass(r), String(r));
    for (const c of letters) {
        // A1 is merged across to K1
        if (r === 1 && c > 'A' && c < 'L') continue;
        const key = c + r;
        const cls = 'cell ' + (style[key] || '');
        if (money[key]) add(cls + ' money', ['£', money[key]]);
        else add(cls, text[key]);
    }
}
```
